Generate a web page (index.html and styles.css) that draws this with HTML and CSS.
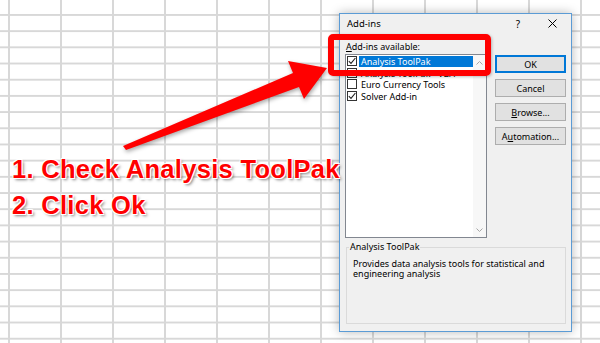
FILE: index.html
```html
<!DOCTYPE html>
<html>
<head>
<meta charset="utf-8">
<link rel="stylesheet" href="styles.css">
</head>
<body>
<div class="sheet">
  <div class="dialog">
    <div class="titlebar">
      <span class="title">Add-ins</span>
      <span class="help">?</span>
      <svg class="close" width="9" height="9" viewBox="0 0 9 9"><path d="M0.5 0.5L8.5 8.5M8.5 0.5L0.5 8.5" stroke="#000" stroke-width="1" fill="none"/></svg>
    </div>
    <div class="content">
      <div class="main">
        <div class="left">
          <div class="label"><u>A</u>dd-ins available:</div>
          <div class="listbox">
            <ul class="items">
              <li class="item"><span class="cb"><svg viewBox="0 0 8 8" width="8" height="8"><path d="M0.8 4.2L3 6.4L7.4 1" stroke="#222" stroke-width="1.1" fill="none"/></svg></span><span class="txt sel">Analysis ToolPak</span></li>
              <li class="item"><span class="cb"></span><span class="txt">Analysis ToolPak - VBA</span></li>
              <li class="item"><span class="cb"></span><span class="txt">Euro Currency Tools</span></li>
              <li class="item"><span class="cb"><svg viewBox="0 0 8 8" width="8" height="8"><path d="M0.8 4.2L3 6.4L7.4 1" stroke="#222" stroke-width="1.1" fill="none"/></svg></span><span class="txt">Solver Add-in</span></li>
            </ul>
            <div class="scroll">
              <svg width="7" height="4" viewBox="0 0 7 4"><path d="M0.5 3.5L3.5 0.5L6.5 3.5" stroke="#a6a6a6" fill="none"/></svg>
              <svg width="7" height="4" viewBox="0 0 7 4"><path d="M0.5 0.5L3.5 3.5L6.5 0.5" stroke="#a6a6a6" fill="none"/></svg>
            </div>
          </div>
        </div>
        <div class="buttons">
          <button class="btn default">OK</button>
          <button class="btn">Cancel</button>
          <button class="btn"><u>B</u>rowse...</button>
          <button class="btn">A<u>u</u>tomation...</button>
        </div>
      </div>
      <fieldset class="group">
        <legend>Analysis ToolPak</legend>
        <p class="desc">Provides data analysis tools for statistical and engineering analysis</p>
      </fieldset>
    </div>
  </div>
  <div class="highlight"></div>
  <svg class="arrow" width="600" height="343" viewBox="0 0 600 343">
    <polygon points="123,146 293,73 288,61 327,68 304,99 299,87 126,150" fill="#ff0000"/>
  </svg>
  <div class="steps">
    <div>1. Check Analysis ToolPak</div>
    <div>2. Click Ok</div>
  </div>
</div>
</body>
</html>
```
FILE: styles.css
```css
html, body {
  margin: 0;
  padding: 0;
}
.sheet {
  position: relative;
  width: 600px;
  height: 343px;
  overflow: hidden;
  background-color: #fff;
  background-image:
    linear-gradient(to right, #d8d8d8 2px, transparent 2px),
    linear-gradient(to bottom, #d8d8d8 2px, transparent 2px);
  background-size: 52px 100%, 100% 16.2px;
  background-position: 8px 0, 0 14px;
}
.dialog {
  position: absolute;
  left: 339px;
  top: 13px;
  width: 233px;
  height: 319px;
  box-sizing: border-box;
  border: 1px solid #5b9bd5;
  background: #f0f0f0;
  box-shadow: 0 0 10px rgba(0, 0, 0, 0.28);
  display: flex;
  flex-direction: column;
  font-family: "Noto Sans", sans-serif;
  font-size: 9px;
  color: #000;
}
.titlebar {
  height: 19px;
  display: flex;
  align-items: center;
  padding-left: 7px;
}
.title {
  flex: 1;
  font-size: 9.5px;
}
.help {
  font-size: 10px;
  margin-right: 28px;
}
.close {
  margin-right: 14px;
  display: block;
}
.content {
  flex: 1;
  display: flex;
  flex-direction: column;
  padding: 8px 5px 7px 5px;
}
.main {
  display: flex;
  gap: 8px;
}
.left {
  width: 142px;
}
.label {
  line-height: 12px;
  padding-left: 1px;
  margin-bottom: 1px;
}
.listbox {
  height: 184px;
  box-sizing: border-box;
  border: 1px solid #828790;
  background: #fff;
  display: flex;
}
.items {
  flex: 1;
  list-style: none;
  margin: 0;
  padding: 1px 0 0 1px;
}
.item {
  height: 11.7px;
  display: flex;
  align-items: flex-start;
}
.cb {
  width: 10px;
  height: 10px;
  box-sizing: border-box;
  border: 1px solid #333;
  background: #fff;
  display: flex;
  align-items: center;
  justify-content: center;
  flex: none;
}
.cb svg {
  display: block;
}
.txt {
  margin-left: 2px;
  padding: 0 2px;
  line-height: 11px;
  height: 11px;
  white-space: nowrap;
}
.txt.sel {
  flex: 1;
  background: #0078d7;
  color: #fff;
}
.scroll {
  width: 13px;
  background: #f7f7f7;
  display: flex;
  flex-direction: column;
  justify-content: space-between;
  align-items: center;
  padding: 6px 0 5px 0;
  box-sizing: border-box;
}
.scroll svg {
  display: block;
}
.buttons {
  width: 71px;
  display: flex;
  flex-direction: column;
  gap: 6px;
  padding-top: 14px;
}
.btn {
  height: 18px;
  box-sizing: border-box;
  border: 1px solid #adadad;
  background: #e1e1e1;
  font-family: "Noto Sans", sans-serif;
  font-size: 9px;
  color: #000;
  padding: 0;
  margin: 0;
}
.btn.default {
  border: 2px solid #0078d7;
}
.group {
  flex: 1;
  margin: 3px 0 0 1px;
  border: 1px solid #dadada;
  padding: 0 2px;
  min-width: 0;
}
.group legend {
  padding: 0 1px;
  line-height: 12px;
}
.desc {
  margin: 6px 0 0 4px;
  line-height: 10px;
}
.highlight {
  position: absolute;
  left: 328px;
  top: 34px;
  width: 163px;
  height: 42px;
  box-sizing: border-box;
  border: 6px solid #ff0000;
  border-radius: 5px;
  box-shadow: 1px 1px 3px rgba(0, 0, 0, 0.25);
}
.arrow {
  position: absolute;
  left: 0;
  top: 0;
  filter: drop-shadow(1px 2px 2px rgba(0, 0, 0, 0.35));
}
.steps {
  position: absolute;
  left: 12px;
  top: 151px;
  font-family: "Liberation Sans", Arial, sans-serif;
  font-weight: bold;
  font-size: 25.5px;
  line-height: 36px;
  letter-spacing: 0.3px;
  color: #ff0000;
  white-space: nowrap;
  text-shadow: -1px -1px 0 #fff, 1px -1px 0 #fff, -1px 1px 0 #fff, 1px 1px 0 #fff, 2px 2px 3px rgba(0, 0, 0, 0.5);
}
```
